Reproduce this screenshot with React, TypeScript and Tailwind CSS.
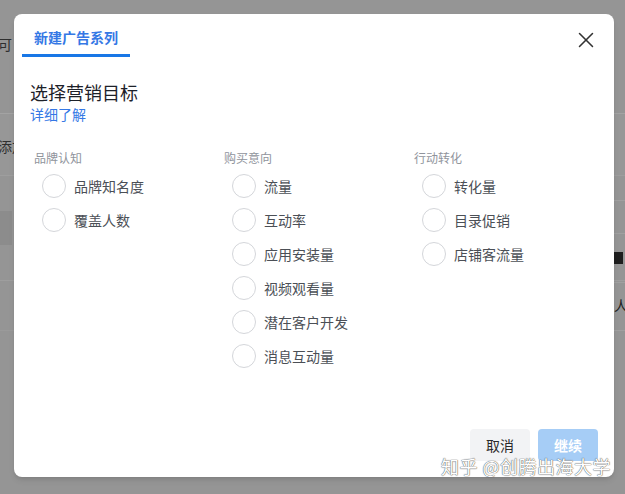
import { X } from "lucide-react"

const groups = [
  { title: "品牌认知", items: ["品牌知名度", "覆盖人数"] },
  {
    title: "购买意向",
    items: ["流量", "互动率", "应用安装量", "视频观看量", "潜在客户开发", "消息互动量"],
  },
  { title: "行动转化", items: ["转化量", "目录促销", "店铺客流量"] },
]

function Radio({ label }: { label: string }) {
  return (
    <div className="h-[34px] flex items-center gap-2 pl-2">
      <span className="w-6 h-6 rounded-full border border-[#d4d6da] bg-white" />
      <span className="text-[14px] text-[#4b4f56]">{label}</span>
    </div>
  )
}

function App() {
  return (
    <div
      className="relative w-[625px] h-[494px] overflow-hidden bg-[#959595] text-[#333]"
      style={{ fontFamily: '"Noto Sans CJK SC", "Noto Sans", sans-serif' }}
    >
      {/* page behind the overlay */}
      <div className="flex flex-col text-[14px] text-[#2f2f2f]">
        <div className="h-[113px] pt-[34px] -ml-[2px]">可</div>
        <div className="h-[62px] border-t border-[#a3a3a3] pt-[22px] -ml-[2px] bg-[#979797]">添加</div>
        <div className="h-[105px] border-t border-[#9e9e9e] flex items-center">
          <div className="w-[12px] h-[34px] bg-[#8c8c8c]" />
        </div>
        <div className="h-[50px] border-t border-[#9e9e9e]" />
        <div className="flex-1 border-t border-[#9a9a9a] bg-[#8d8d8d] h-[170px]" />
      </div>
      <div className="absolute right-0 top-[200px] w-[11px] flex flex-col text-[14px] text-[#222]">
        <div className="h-[33px] border-t border-[#a0a0a0]" />
        <div className="h-[49px] border-t border-[#a0a0a0] flex items-center">
          <div className="w-[9px] h-[12px] bg-[#1e1e1e]" />
        </div>
        <div className="h-[48px] border-t border-[#a0a0a0] pt-[12px]">人</div>
        <div className="border-t border-[#a0a0a0]" />
      </div>

      {/* modal */}
      <div className="absolute left-[14px] top-[14px] w-[600px] h-[463px] bg-white rounded-lg flex flex-col shadow-md">
        <div className="flex justify-between items-start pl-2 pr-[15px]">
          <div className="w-[108px] pt-[13px] pb-[7px] border-b-[3px] border-[#1877e6] text-center text-[14px] leading-[20px] font-bold text-[#3578e5]">
            新建广告系列
          </div>
          <X className="mt-[13px] w-[26px] h-[26px] text-[#333]" strokeWidth={1.4} />
        </div>

        <div className="px-4 pt-[23px] flex flex-col">
          <div className="text-[18px] leading-[24px] text-[#1d2129]">选择营销目标</div>
          <div className="text-[14px] leading-[20px] text-[#3578e5]">详细了解</div>
        </div>

        <div className="px-5 pt-[26px] flex">
          {groups.map((g) => (
            <div key={g.title} className="w-[190px] shrink-0 flex flex-col">
              <div className="text-[12px] leading-[16px] text-[#90949c] mb-[3px]">{g.title}</div>
              {g.items.map((i) => (
                <Radio key={i} label={i} />
              ))}
            </div>
          ))}
        </div>

        <div className="mt-auto flex justify-end gap-2 px-4 pb-4">
          <button className="w-[60px] h-8 rounded bg-[#f2f3f5] text-[14px] text-[#2a2a2a]">取消</button>
          <button className="w-[60px] h-8 rounded bg-[#a6cdf6] text-[14px] font-bold text-white">继续</button>
        </div>
      </div>

      {/* watermark */}
      <div className="absolute left-[441px] top-[453px] text-[18px] leading-[26px] text-white tracking-[0.5px] [text-shadow:0_0_1px_#555,0_0_1px_#555]">
        知乎 @创腾出海大学
      </div>
    </div>
  )
}

export default App
